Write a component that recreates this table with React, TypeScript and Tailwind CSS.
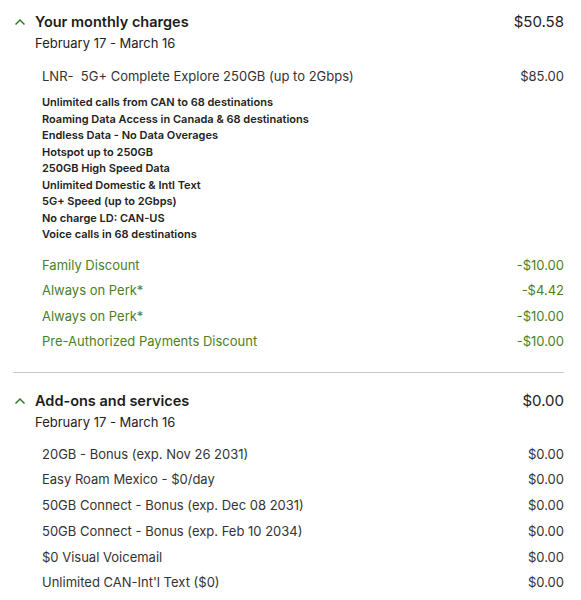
import React from 'react'

const features = [
  'Unlimited calls from CAN to 68 destinations',
  'Roaming Data Access in Canada & 68 destinations',
  'Endless Data - No Data Overages',
  'Hotspot up to 250GB',
  '250GB High Speed Data',
  'Unlimited Domestic & Intl Text',
  '5G+ Speed (up to 2Gbps)',
  'No charge LD: CAN-US',
  'Voice calls in 68 destinations',
]

const discounts = [
  { label: 'Family Discount', amount: '-$10.00' },
  { label: 'Always on Perk*', amount: '-$4.42' },
  { label: 'Always on Perk*', amount: '-$10.00' },
  { label: 'Pre-Authorized Payments Discount', amount: '-$10.00' },
]

const addons = [
  { label: '20GB - Bonus (exp. Nov 26 2031)', amount: '$0.00' },
  { label: 'Easy Roam Mexico - $0/day', amount: '$0.00' },
  { label: '50GB Connect - Bonus (exp. Dec 08 2031)', amount: '$0.00' },
  { label: '50GB Connect - Bonus (exp. Feb 10 2034)', amount: '$0.00' },
  { label: '$0 Visual Voicemail', amount: '$0.00' },
  { label: "Unlimited CAN-Int'l Text ($0)", amount: '$0.00' },
]

function Chevron() {
  return (
    <svg width="12" height="8" viewBox="0 0 12 8" className="mt-[6px] shrink-0">
      <path d="M1.5 6.5 L6 2 L10.5 6.5" stroke="#2f7a2a" strokeWidth="1.5" fill="none" />
    </svg>
  )
}

function SectionHeader({ title, total }: { title: string; total: string }) {
  return (
    <div className="flex items-start justify-between">
      <div className="flex items-start gap-[9px]">
        <Chevron />
        <div>
          <h2 className="text-[14.5px] leading-[20px] font-semibold text-[#1c1c1c]">{title}</h2>
          <p className="text-[13px] leading-[20px] text-[#222] mt-[1px]">February 17 - March 16</p>
        </div>
      </div>
      <span className="text-[15px] leading-[20px] text-[#222]">{total}</span>
    </div>
  )
}

export default function App() {
  return (
    <div className="w-[581px] h-[600px] bg-white pl-[14px] pr-[17px] pt-[12px] overflow-hidden" style={{ fontFamily: 'Inter, "Liberation Sans", sans-serif' }}>
      {/* Monthly charges */}
      <SectionHeader title="Your monthly charges" total="$50.58" />

      <div className="pl-[28px] mt-[14px]">
        <div className="flex justify-between text-[13px] leading-[18px] text-[#333]">
          <span>LNR-&nbsp; 5G+ Complete Explore 250GB (up to 2Gbps)</span>
          <span>$85.00</span>
        </div>

        <ul className="mt-[9px]">
          {features.map((f, i) => (
            <li key={i} className="text-[11px] leading-[16.5px] font-semibold text-[#222]">
              {f}
            </li>
          ))}
        </ul>

        <div className="mt-[10px]">
          {discounts.map((d, i) => (
            <div key={i} className="flex justify-between text-[13px] leading-[25.5px] text-[#4a7f26]">
              <span>{d.label}</span>
              <span>{d.amount}</span>
            </div>
          ))}
        </div>
      </div>

      <div className="border-t border-[#c8c8c8] mt-[17px] -ml-[1px]" />

      {/* Add-ons */}
      <div className="mt-[18px]">
        <SectionHeader title="Add-ons and services" total="$0.00" />
        <div className="pl-[28px] mt-[10px]">
          {addons.map((a, i) => (
            <div key={i} className="flex justify-between text-[13px] leading-[25.8px] text-[#333]">
              <span>{a.label}</span>
              <span>{a.amount}</span>
            </div>
          ))}
        </div>
      </div>
    </div>
  )
}
